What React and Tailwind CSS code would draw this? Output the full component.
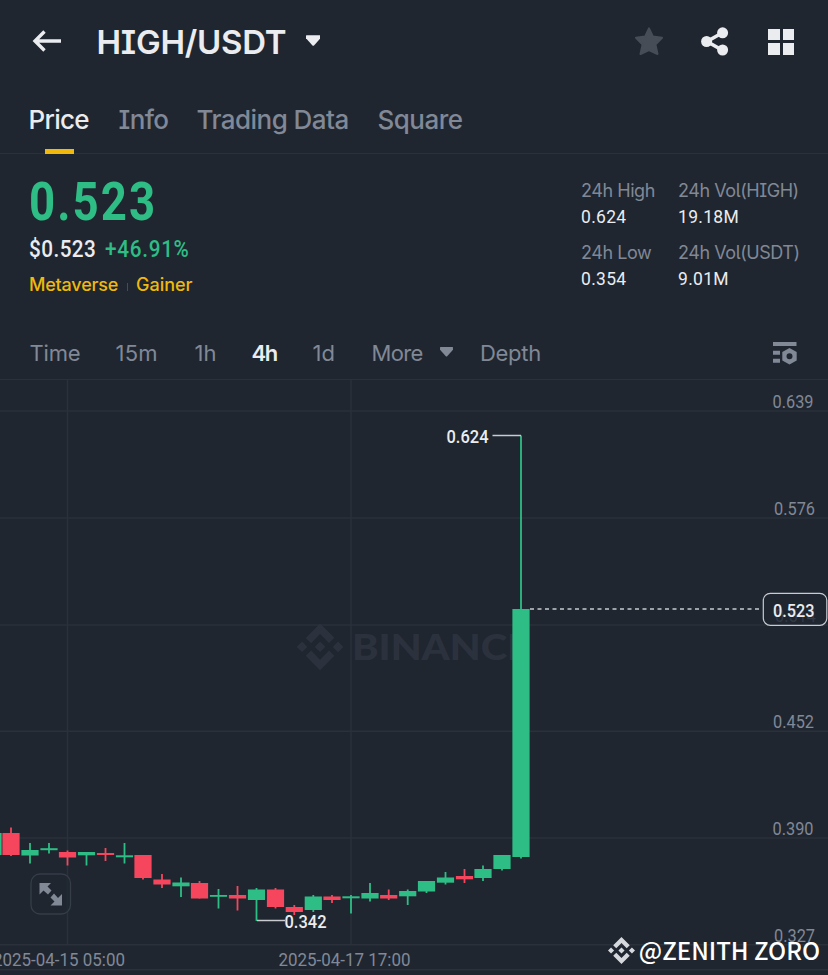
const green = '#2ebd85';
const red = '#f6465d';

// [x, high, top, bottom, low, color]
const candles = [
  [-7, 833, 833, 855, 855, green],
  [11, 827.5, 833, 855, 856, red],
  [30, 843, 850, 855.5, 863.5, green],
  [49, 843, 848.2, 850.2, 853.5, green],
  [67.5, 850.5, 852, 857.5, 865.5, red],
  [86.5, 852, 852, 855.3, 865.5, green],
  [105.5, 848, 853, 855, 861, red],
  [124.5, 843, 855.3, 857.3, 863.5, green],
  [143, 855, 855, 878, 879.5, red],
  [162, 874, 879.5, 884.5, 888, red],
  [181, 877.5, 882.5, 886.3, 897, green],
  [199.5, 881, 883, 898.5, 898.5, red],
  [218.5, 889, 895, 896.8, 908.5, green],
  [237.5, 886, 895, 898.5, 910.5, red],
  [256.5, 888, 889.5, 900, 921, green],
  [275.5, 888, 889.5, 907, 908.5, red],
  [294.3, 905, 907, 912, 915, red],
  [313.3, 895, 896.5, 910, 912, green],
  [332, 895, 896.5, 900, 903, red],
  [351, 895, 896.3, 898.3, 913.5, green],
  [370, 883, 893, 898.5, 901.5, green],
  [388.7, 889.5, 895, 898.5, 900, red],
  [407.7, 889.5, 891, 896.3, 905, green],
  [426.5, 881, 881, 891.5, 893, green],
  [445.5, 872, 877.5, 882.7, 884.5, green],
  [464.5, 869, 876, 879.3, 883, red],
  [483, 865.5, 869, 878, 881, green],
  [502, 855, 855, 869, 870.5, green],
  [521, 435.5, 609, 857, 858.5, green],
];

const priceLabels = [
  { text: '0.639', x: 772.5, y: 408 },
  { text: '0.576', x: 774, y: 515 },
  { text: '0.452', x: 773, y: 728 },
  { text: '0.390', x: 772.5, y: 835 },
  { text: '0.327', x: 774, y: 941.5 },
];

const stats = [
  { label: '24h High', value: '0.624' },
  { label: '24h Vol(HIGH)', value: '19.18M' },
  { label: '24h Low', value: '0.354' },
  { label: '24h Vol(USDT)', value: '9.01M' },
];

const logoPath = 'M16.624 13.92l2.718 2.716L12 24l-7.365-7.364 2.718-2.716L12 18.58zM21.26 9.284L24 12l-2.715 2.716L18.568 12zM12 9.285l2.716 2.691L12 14.694 9.272 12zM2.716 9.284L5.409 12l-2.692 2.692L0 12zM12 0l7.342 7.34-2.718 2.716L12 5.42l-4.647 4.66-2.718-2.716z';

function Caret({ className }) {
  return (
    <svg viewBox="0 0 15 11" className={className} fill="currentColor">
      <path d="M.5 0h14q.5 0 .5.6v2.6L8.3 10.7q-.8.6-1.6 0L0 3.2V.6Q0 0 .5 0z" />
    </svg>
  );
}

function Header() {
  return (
    <div className="flex h-[84px] items-center pl-[32px] pr-[34px] text-[#eaecef]">
      <svg className="mb-[2px] h-[22px] w-[29px]" viewBox="0 0 29 22" fill="none" stroke="currentColor" strokeWidth="3.4">
        <path d="M12.5 1.5L3 11l9.500 9.500M3 11h26" />
      </svg>
      <h1 className="ml-[35.500px] w-[190px] whitespace-nowrap text-[33px] font-semibold leading-none tracking-[-0.250px]">HIGH/USDT</h1>
      <Caret className="ml-[19px] mb-1 h-[11px] w-[14.500px]" />
      <div className="ml-auto flex items-center">
        <svg className="mb-[2px] h-[29px] w-[28px] text-[#474d57]" viewBox="0 0 28 29" fill="currentColor" stroke="currentColor" strokeWidth="2" strokeLinejoin="round">
          <path d="M14 1.3L17.8 9.5L27 10.8L20.4 17.5L22.5 27L14 23L5.5 27L7.6 17.5L1 10.8L10.2 9.5z" />
        </svg>
        <svg className="mb-[2px] ml-[38px] h-[29px] w-[28px]" viewBox="0 0 28 29" fill="currentColor">
          <path d="M21 6L6 14.5L21 23" fill="none" stroke="currentColor" strokeWidth="3.6" />
          <circle cx="21.6" cy="5.8" r="5.5" />
          <circle cx="5.6" cy="14.5" r="5.5" />
          <circle cx="21.6" cy="23" r="5.5" />
        </svg>
        <div className="mb-px ml-[39px] grid grid-cols-2 gap-[3px]">
          {[0, 1, 2, 3].map(i => <span key={i} className="h-[11.500px] w-[11.500px] bg-[#eaecef]" />)}
        </div>
      </div>
    </div>
  );
}

function Tabs() {
  return (
    <div className="flex h-[70px] border-b border-[#2b313a] pl-[28.500px] pt-[19px] text-[26px] font-medium leading-[34px] text-[#818896]">
      <div className="relative w-[90px] text-[#eaecef]">
        <span className="tracking-[-0.700px]">Price</span>
        <span className="absolute left-[16px] top-[46px] h-[5px] w-[29px] bg-[#f0b90b]" />
      </div>
      <div className="w-[78px] tracking-[-0.600px]">Info</div>
      <div className="w-[181px] whitespace-nowrap tracking-[-0.550px]">Trading Data</div>
      <div className="tracking-[-0.500px]">Square</div>
    </div>
  );
}

function Summary() {
  return (
    <div className="flex h-[176px] justify-between pl-[29px] pr-[29px]">
      <div>
        <div className="mt-[20px] h-[56px] w-[140px] origin-left scale-x-[0.86] font-['Roboto'] text-[53px] font-bold leading-[56px] tracking-[2.400px] text-[#2ebd85]">0.523</div>
        <div className="mt-[7px] flex h-[26px] font-['Roboto'] text-[23px] font-medium leading-[26px] text-[#eaecef]">
          <span className="w-[75.500px] origin-left scale-x-[0.9] tracking-[0.500px]">$0.523</span>
          <span className="origin-left scale-x-[0.9] tracking-[0.800px] text-[#2ebd85]">+46.91%</span>
        </div>
        <div className="mt-[9px] flex items-center text-[18px] font-medium leading-[26px] text-[#f0b90b]">
          <span className="w-[98px] tracking-[-0.200px]">Metaverse</span>
          <span className="mr-[8px] mt-1 h-[8px] w-px bg-[#474d57]" />
          <span>Gainer</span>
        </div>
      </div>
      <div className="mt-[23px] grid h-[124px] grid-cols-[97px_121px] content-start">
        {stats.map(s => (
          <div key={s.label} className="h-[62px] whitespace-nowrap">
            <div className="text-[18px] leading-[27px] tracking-[-0.450px] text-[#818896]">{s.label}</div>
            <div className="origin-left scale-x-[0.92] font-['Roboto'] text-[19px] leading-[26px] tracking-[0.350px] text-[#eaecef]">{s.value}</div>
          </div>
        ))}
      </div>
    </div>
  );
}

function Intervals() {
  return (
    <div className="flex h-[50px] items-center border-b border-[#2b313a] pb-[2px] pl-[29.500px] pr-[31.500px] text-[22px] text-[#818896]">
      <span className="w-[86px] tracking-[-0.200px]">Time</span>
      <span className="w-[79px] tracking-[0.200px]">15m</span>
      <span className="w-[57px]">1h</span>
      <span className="w-[61px] font-semibold tracking-[-1.500px] text-[#eaecef]">4h</span>
      <span className="w-[59px]">1d</span>
      <span className="w-[68px] tracking-[-0.700px]">More</span>
      <Caret className="mb-[3px] h-[9.500px] w-[13px]" />
      <span className="ml-[27.500px] tracking-[-0.300px]">Depth</span>
      <svg className="ml-auto h-[23px] w-[24px]" viewBox="0 0 24 23" fill="currentColor">
        <path d="M0 0h23.500v4H0zM0 8.800h7v4H0zM0 16.800h7v4H0z" />
        <path fillRule="evenodd" d="M16.500 6L23.700 10v8.500L16.500 22.500L9.300 18.500V10zM16.500 11.200a3 3 0 1 0 0 6 3 3 0 1 0 0-6z" />
      </svg>
    </div>
  );
}

function Chart() {
  return (
    <svg className="block h-[595px] w-[828px] font-['Roboto'] text-[18px]" viewBox="0 380 828 595">
      <g stroke="#2b313a" strokeWidth="1.5">
        {[411, 518, 625, 731.3, 838, 944.7, 969.7].map(y => <path key={y} d={`M0 ${y}H828`} />)}
        <path d="M67.5 380V944M351 380V944" />
      </g>

      {/* Logo watermark */}
      <g fill="#2c323d">
        <path d={logoPath} transform="translate(296.8 623.6) scale(1.94)" />
        <text x="352" y="660" textLength="178" lengthAdjust="spacingAndGlyphs" fontSize="36" fontWeight="900" fontFamily="Lato">BINANCE</text>
      </g>

      {candles.map(([x, high, top, bottom, low, color]) => (
        <g key={x} fill={color}>
          <rect x={x - 0.9} y={high} width="1.8" height={low - high} />
          <rect x={x - 8.6} y={top} width="17.2" height={bottom - top} />
        </g>
      ))}

      {/* High and low markers */}
      <path d="M492.5 435.5H521M257 920.5H285" stroke="#c8cbd0" strokeWidth="1.3" fill="none" />
      <g fill="#eaecef" fontWeight="500">
        <text x="446.5" y="442.5" textLength="42" lengthAdjust="spacingAndGlyphs">0.624</text>
        <text x="284.5" y="927.5" textLength="42" lengthAdjust="spacingAndGlyphs">0.342</text>
      </g>

      <g fill="#818896" fontSize="17.5">
        {priceLabels.map(p => (
          <text key={p.text} x={p.x} y={p.y} textLength="41" lengthAdjust="spacingAndGlyphs">{p.text}</text>
        ))}
        <text x="-7" y="965.5" textLength="132" lengthAdjust="spacingAndGlyphs">2025-04-15 05:00</text>
        <text x="278.5" y="965.5" textLength="132" lengthAdjust="spacingAndGlyphs">2025-04-17 17:00</text>
      </g>

      {/* Last price */}
      <path d="M530 609H762" stroke="#c8cbd0" strokeWidth="1.3" strokeDasharray="4 3.5" />
      <rect x="763.3" y="593.3" width="63.5" height="32" rx="7" fill="#1f2630" stroke="#c8cbd0" strokeWidth="1.2" />
      <text x="775" y="621.5" textLength="41" lengthAdjust="spacingAndGlyphs" fontSize="17.5" fill="#333a45">0.514</text>
      <text x="773" y="616.5" textLength="41.5" lengthAdjust="spacingAndGlyphs" fontWeight="500" fill="#eaecef">0.523</text>

      {/* Fullscreen button */}
      <rect x="31" y="874" width="39.5" height="40" rx="9" fill="#1f2630" fillOpacity="0.7" stroke="#363d48" strokeWidth="1.3" />
      <g fill="#818896">
        <path d="M39.5 883H51L47.5 886.5L51.5 890.5L48 894.5L43.5 890.5L39.5 894.5z" />
        <path d="M62 905.5H50.5L54.5 901.5L50.5 897.5L54 893.5L58 898L62 894z" />
      </g>
    </svg>
  );
}

export default function App() {
  return (
    <div className="relative h-[975px] w-[828px] overflow-hidden bg-[#1f2630] font-['Inter',sans-serif] [font-feature-settings:'cv08','cv05']">
      <Header />
      <Tabs />
      <Summary />
      <Intervals />
      <Chart />

      {/* Author tag */}
      <div className="absolute bottom-[8px] right-[8px] flex h-[34px] items-center gap-[4px] font-['Noto_Sans_CJK_SC',sans-serif] text-[24px] font-medium leading-none text-white">
        <svg className="h-[27px] w-[27px] text-[#d5d8dd]" viewBox="0 0 24 24" fill="currentColor"><path d={logoPath} /></svg>
        <span className="whitespace-nowrap">@ZENITH ZORO</span>
      </div>
    </div>
  );
}
